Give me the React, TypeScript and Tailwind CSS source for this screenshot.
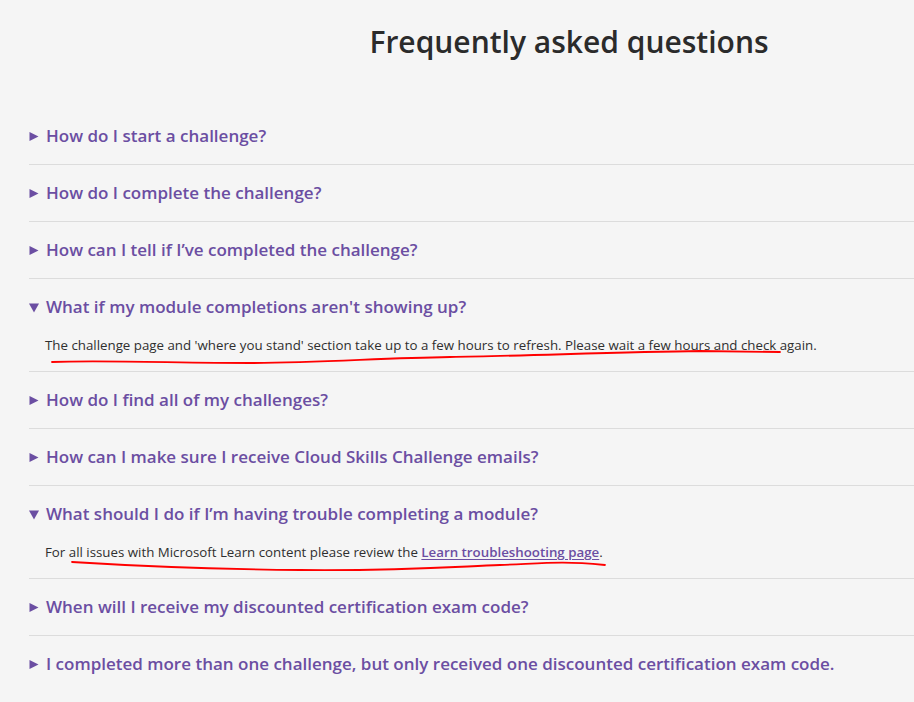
import React, { useState } from 'react';

type Faq = {
  q: string;
  a?: React.ReactNode;
};

const faqs: Faq[] = [
  { q: 'How do I start a challenge?' },
  { q: 'How do I complete the challenge?' },
  { q: 'How can I tell if I’ve completed the challenge?' },
  {
    q: "What if my module completions aren't showing up?",
    a: (
      <>
        The challenge page and 'where you stand' section take up to a few hours to refresh. Please wait a few hours and
        check again.
      </>
    ),
  },
  { q: 'How do I find all of my challenges?' },
  { q: 'How can I make sure I receive Cloud Skills Challenge emails?' },
  {
    q: 'What should I do if I’m having trouble completing a module?',
    a: (
      <>
        For all issues with Microsoft Learn content please review the{' '}
        <a href="#" className="font-semibold text-[#6b4ea2] underline underline-offset-2">
          Learn troubleshooting page
        </a>
        .
      </>
    ),
  },
  { q: 'When will I receive my discounted certification exam code?' },
  { q: 'I completed more than one challenge, but only received one discounted certification exam code.' },
];

function Caret({ open }: { open: boolean }) {
  return (
    <svg width="10" height="11" viewBox="0 0 10 11" className="shrink-0 fill-[#6b4ea2]">
      {open ? <polygon points="0,1.5 10,1.5 5,10.5" /> : <polygon points="0.5,1 9.5,5.5 0.5,10" />}
    </svg>
  );
}

function FaqItem({ item, defaultOpen, last }: { item: Faq; defaultOpen: boolean; last: boolean }) {
  const [open, setOpen] = useState(defaultOpen);
  return (
    <div className={last ? '' : 'border-b border-[#dcdcdc]'}>
      <button
        onClick={() => setOpen((o) => !o)}
        className="flex h-[56px] w-full items-center gap-[7px] text-left text-[17px] font-semibold text-[#6b4ea2]"
      >
        <Caret open={open} />
        <span>{item.q}</span>
      </button>
      {open && item.a && (
        <div className="pl-[16px] pt-[2px] pb-[18px] text-[13.3px] leading-[16px] text-[#2f2f2f]">{item.a}</div>
      )}
    </div>
  );
}

export default function App() {
  return (
    <div
      className="relative min-h-[702px] overflow-hidden bg-[#f5f5f5]"
      style={{ fontFamily: '"Open Sans", "Noto Sans", sans-serif' }}
    >
      <h1 className="pl-[224px] pt-[14px] pb-[38px] text-center text-[30px] font-semibold leading-[56px] text-[#2b2b2b]">
        Frequently asked questions
      </h1>

      <div className="pl-[29px]">
        {faqs.map((f, i) => (
          <FaqItem key={f.q} item={f} defaultOpen={i === 3 || i === 6} last={i === faqs.length - 1} />
        ))}
      </div>

      {/* hand-drawn red marks over the answers */}
      <svg className="pointer-events-none absolute inset-0" width="914" height="702" viewBox="0 0 914 702">
        <path
          d="M52 362 C 100 360, 180 363, 250 363 S 380 358, 450 357 S 620 352, 700 351 L 780 352"
          fill="none"
          stroke="#ff0000"
          strokeWidth="1.8"
          strokeLinecap="round"
        />
        <path
          d="M72 562 C 120 565, 200 569, 300 570 S 450 567, 500 565 S 560 561, 605 565"
          fill="none"
          stroke="#ff0000"
          strokeWidth="1.8"
          strokeLinecap="round"
        />
      </svg>
    </div>
  );
}
